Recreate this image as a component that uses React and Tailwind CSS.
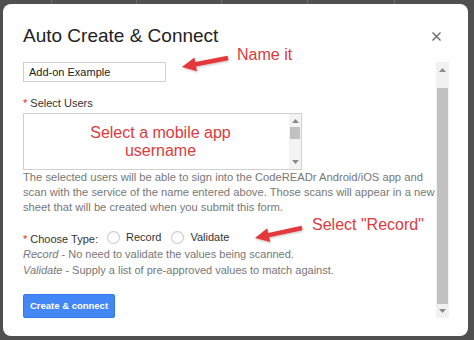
import React from 'react';

const FONT = { fontFamily: '"Liberation Sans", Arial, sans-serif' };

function ScrollArrow({ up, className = '' }) {
  return (
    <svg className={className} width="7" height="4" viewBox="0 0 7 4" aria-hidden="true">
      <path d={up ? 'M0 4 3.5 0 7 4Z' : 'M0 0 3.5 4 7 0Z'} fill="#8a8a8a" />
    </svg>
  );
}

function Radio({ label }) {
  return (
    <label className="inline-flex items-center">
      <span className="w-[13px] h-[13px] rounded-full border border-[#c4c4c4] bg-white shadow-[inset_0_1px_1px_rgba(0,0,0,0.06)]" />
      <span className="ml-[6px] text-[#333]">{label}</span>
    </label>
  );
}

export default function App() {
  return (
    <div className="relative w-[474px] h-[340px] overflow-hidden bg-[#505050]" style={FONT}>
      <div className="flex h-[4px]">
        {[52, 85, 85, 86, 87].map((w, i) => (
          <div key={i} className="border-r border-[#6b6b6b]" style={{ width: w }} />
        ))}
      </div>

      <div className="ml-[3px] w-[465px] h-[332px] rounded-lg bg-white pt-[21px] pl-[20px] pr-[19px]">
        <div className="flex items-center justify-between pr-[8px]">
          <h1 className="text-[19px] leading-[22px] text-[#222] font-normal">Auto Create &amp; Connect</h1>
          <svg width="9" height="9" viewBox="0 0 9 9" aria-hidden="true">
            <path d="M0.5 0.5 8.5 8.5M8.5 0.5 0.5 8.5" stroke="#666" strokeWidth="1.3" />
          </svg>
        </div>

        <div className="mt-[15px] flex">
          <div className="flex-1 min-w-0 text-[11px]">
            <div className="w-[143px] h-[20px] border border-[#d0d0d0] flex items-center pl-[5px] text-[11px] text-[#222]">
              Add-on Example
            </div>

            <div className="mt-[14px] leading-[14px] text-[#333]">
              <span className="text-[#d93025]">*</span> Select Users
            </div>

            <div className="mt-[3px] w-[279px] h-[57px] border border-[#d0d0d0] flex">
              <div className="flex-1 flex flex-col items-center justify-center pl-[8px] text-[16px] leading-[18px] text-[#e03a3e]">
                <span>Select a mobile app</span>
                <span>username</span>
              </div>
              <div className="w-[12px] flex flex-col items-center bg-[#f3f3f3]">
                <ScrollArrow up className="mt-[5px]" />
                <div className="mt-[4px] w-[10px] h-[12px] bg-[#c1c1c1]" />
                <div className="flex-1" />
                <ScrollArrow className="mb-[5px]" />
              </div>
            </div>

            <p className="whitespace-nowrap text-[11.2px] leading-[15px] text-[#777]">
              The selected users will be able to sign into the CodeREADr Android/iOS app and
              <br />
              scan with the service of the name entered above. Those scans will appear in a new
              <br />
              sheet that will be created when you submit this form.
            </p>

            <div className="mt-[17px] h-[14px] flex items-center text-[#333]">
              <span className="text-[#d93025]">*</span>
              <span className="ml-[3px]">Choose Type:</span>
              <span className="ml-[9px]"><Radio label="Record" /></span>
              <span className="ml-[10px]"><Radio label="Validate" /></span>
            </div>

            <div className="leading-[16px] text-[#777]">
              <div><i>Record</i> - No need to validate the values being scanned.</div>
              <div><i>Validate</i> - Supply a list of pre-approved values to match against.</div>
            </div>

            <button
              type="button"
              className="mt-[16px] w-[92px] h-[24px] rounded-[2px] border border-[#3079ed] bg-[#4287f5] text-white text-[9.5px] font-bold"
            >
              Create &amp; connect
            </button>
          </div>

          <div className="w-[13px] flex flex-col items-center bg-[#f1f1f1]">
            <ScrollArrow up className="mt-[6px]" />
            <div className="mt-[16px] w-[11px] h-[216px] bg-[#c1c1c1]" />
            <ScrollArrow className="mt-[5px]" />
          </div>
        </div>
      </div>

      <span className="absolute left-[237px] top-[46px] text-[16px] leading-[18px] text-[#e03a3e]">Name it</span>
      <span className="absolute left-[312px] top-[216px] text-[16px] leading-[18px] text-[#e03a3e]">Select "Record"</span>

      <svg className="absolute inset-0 pointer-events-none" width="474" height="340" viewBox="0 0 474 340" aria-hidden="true">
        <defs>
          <filter id="sh" x="-20%" y="-50%" width="140%" height="200%">
            <feDropShadow dx="0.5" dy="1" stdDeviation="0.8" floodColor="#000" floodOpacity="0.25" />
          </filter>
        </defs>
        <polygon
          filter="url(#sh)"
          fill="#e5393c"
          points="182,67 197,71.2 196.1,66.5 228.4,60.2 227.6,55.8 195.3,62.1 194.4,57.4"
        />
        <polygon
          filter="url(#sh)"
          fill="#e5393c"
          points="255,238 270.2,241.9 269.2,237.3 302.5,230.2 301.5,225.8 268.2,232.9 267.2,228.3"
        />
      </svg>
    </div>
  );
}
